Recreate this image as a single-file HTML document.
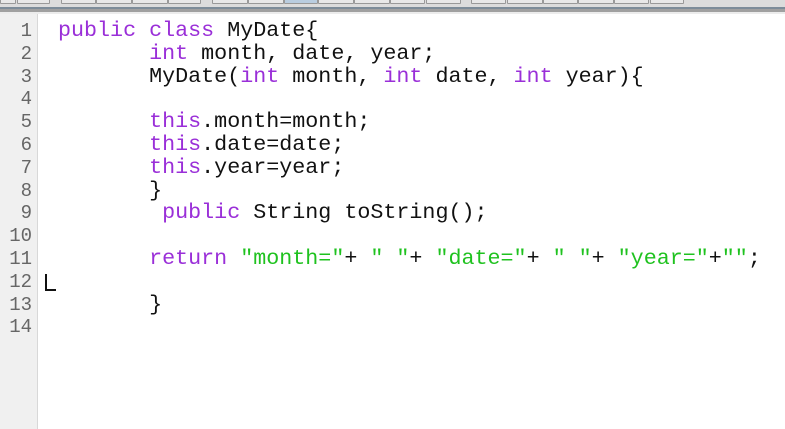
<!DOCTYPE html>
<html><head><style>
body{margin:0;width:785px;height:429px;overflow:hidden;background:#fff;position:relative;font-family:"Liberation Mono",monospace}
.tb{position:absolute;left:0;top:0;width:785px;height:7px;background:#dcdcdc}
.b{position:absolute;top:-3px;height:5px;border:1px solid #999;background:#e8e8e8;border-radius:1px}
.l1{position:absolute;left:0;top:7px;width:785px;height:2px;background:#7d8c99}
.l2{position:absolute;left:0;top:9px;width:785px;height:3px;background:#a0a0a0}
.l3{position:absolute;left:0;top:12px;width:785px;height:2px;background:#ececec}
.g{position:absolute;left:0;top:14px;width:37px;height:415px;background:#f0f0f0;border-right:1px solid #d8d8d8}
.n{position:absolute;left:0;top:20px;width:32px;text-align:right;font-size:19px;line-height:22.8px;color:#666}
.c{position:absolute;left:58px;top:20px;font-size:21.7px;line-height:22.8px;color:#111;white-space:pre}
.k{color:#9a2fd8}.s{color:#1fc21f}
.cur{position:absolute;left:45px;top:274px;width:11px;height:17px;border-left:2px solid #111;border-bottom:2px solid #111;box-sizing:border-box}
</style></head><body>
<div class="tb">
<div class="b" style="left:0;width:14px"></div><div class="b" style="left:17px;width:31px"></div>
<div class="b" style="left:61px;width:33px"></div><div class="b" style="left:96px;width:34px"></div><div class="b" style="left:132px;width:34px"></div><div class="b" style="left:168px;width:31px"></div>
<div class="b" style="left:212px;width:34px"></div><div class="b" style="left:248px;width:34px"></div><div class="b" style="left:284px;width:32px;background:#b9cde0"></div><div class="b" style="left:318px;width:34px"></div><div class="b" style="left:354px;width:34px"></div><div class="b" style="left:390px;width:33px"></div>
<div class="b" style="left:426px;width:33px"></div><div class="b" style="left:471px;width:33px"></div><div class="b" style="left:507px;width:34px"></div><div class="b" style="left:543px;width:33px"></div><div class="b" style="left:578px;width:34px"></div><div class="b" style="left:614px;width:33px"></div><div class="b" style="left:650px;width:32px"></div>
</div>
<div class="l1"></div><div class="l2"></div><div class="l3"></div>
<div class="g"></div>
<div class="n">1<br>2<br>3<br>4<br>5<br>6<br>7<br>8<br>9<br>10<br>11<br>12<br>13<br>14</div>
<div class="c"><span class="k">public</span> <span class="k">class</span> MyDate{
       <span class="k">int</span> month, date, year;
       MyDate(<span class="k">int</span> month, <span class="k">int</span> date, <span class="k">int</span> year){

       <span class="k">this</span>.month=month;
       <span class="k">this</span>.date=date;
       <span class="k">this</span>.year=year;
       }
        <span class="k">public</span> String toString();

       <span class="k">return</span> <span class="s">"month="</span>+ <span class="s">" "</span>+ <span class="s">"date="</span>+ <span class="s">" "</span>+ <span class="s">"year="</span>+<span class="s">""</span>;

       }
</div>
<div class="cur"></div>
</body></html>
